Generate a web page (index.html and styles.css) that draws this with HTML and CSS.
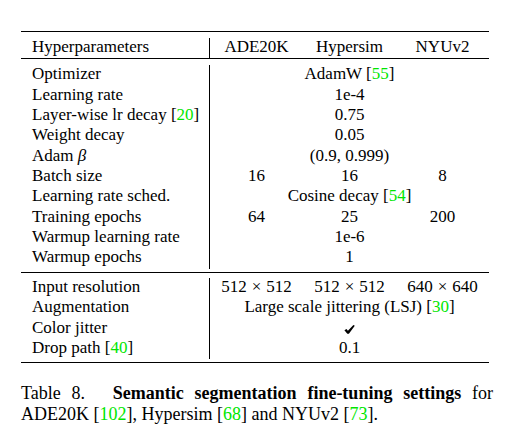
FILE: index.html
```html
<!DOCTYPE html>
<html lang="en">
<head>
  <meta charset="UTF-8">
  <title>Table 8 - Semantic segmentation fine-tuning settings</title>
  <link rel="stylesheet" href="styles.css">
</head>
<body>

<div class="table">
  <div class="sec">
    <span class="vline"></span>
    <div class="label">Hyperparameters</div>
    <div class="val">ADE20K</div>
    <div class="val">Hypersim</div>
    <div class="val">NYUv2</div>
  </div>

  <div class="sec sec-main">
    <span class="vline span-10"></span>
    <div class="label">Optimizer</div>
    <div class="val all">AdamW [<span class="cite">55</span>]</div>
    <div class="label">Learning rate</div>
    <div class="val all">1e-4</div>
    <div class="label">Layer-wise lr decay [<span class="cite">20</span>]</div>
    <div class="val all">0.75</div>
    <div class="label">Weight decay</div>
    <div class="val all">0.05</div>
    <div class="label">Adam <i>β</i></div>
    <div class="val all">(0.9, 0.999)</div>
    <div class="label">Batch size</div>
    <div class="val">16</div>
    <div class="val">16</div>
    <div class="val">8</div>
    <div class="label">Learning rate sched.</div>
    <div class="val all">Cosine decay [<span class="cite">54</span>]</div>
    <div class="label">Training epochs</div>
    <div class="val">64</div>
    <div class="val">25</div>
    <div class="val">200</div>
    <div class="label">Warmup learning rate</div>
    <div class="val all">1e-6</div>
    <div class="label">Warmup epochs</div>
    <div class="val all">1</div>
  </div>

  <div class="sec sec-input">
    <span class="vline span-4"></span>
    <div class="label">Input resolution</div>
    <div class="val">512<span class="times">×</span>512</div>
    <div class="val">512<span class="times">×</span>512</div>
    <div class="val">640<span class="times">×</span>640</div>
    <div class="label">Augmentation</div>
    <div class="val all">Large scale jittering (LSJ) [<span class="cite">30</span>]</div>
    <div class="label">Color jitter</div>
    <div class="val all">
      <svg class="check" width="11" height="9" viewBox="0 0 11 9">
        <path d="M0.4 5.3 L2.5 3.9 L3.9 5.8 L9.4 0 L10.8 0.8 L4.9 8.8 L3.3 8.8 Z" fill="#000"/>
      </svg>
    </div>
    <div class="label">Drop path [<span class="cite">40</span>]</div>
    <div class="val all">0.1</div>
  </div>
</div>

<div class="caption">
  <div class="cap-line"><span class="cap-label">Table 8.</span> <b>Semantic segmentation fine-tuning settings</b> for</div>
  <div>ADE20K [<span class="cite">102</span>], Hypersim [<span class="cite">68</span>] and NYUv2 [<span class="cite">73</span>].</div>
</div>

</body>
</html>
```

FILE: styles.css
```css
* {
  box-sizing: border-box;
  margin: 0;
  padding: 0;
}

body {
  background: #fff;
  color: #000;
  font-family: "Liberation Serif", "Times New Roman", serif;
  font-size: 17px;
}

.table {
  width: 468px;
  margin: 31px 0 0 21px;
  border-top: 1px solid #000;
  border-bottom: 1px solid #000;
}

.sec {
  display: grid;
  grid-template-columns: 188px 1px repeat(3, 1fr);
  grid-auto-rows: 20.33px;
  line-height: 20.33px;
  padding: 5px 0 1px;
}

.sec + .sec {
  border-top: 1px solid #000;
}

.sec-main {
  padding: 5px 0 4.5px;
}

.sec-input {
  padding: 4px 0 3.5px;
}

.vline {
  grid-column: 2;
  grid-row: 1 / span 1;
  background: #000;
  margin: 1px 0 -1px;
}

.vline.span-10 {
  grid-row: 1 / span 10;
}

.vline.span-4 {
  grid-row: 1 / span 4;
}

.label {
  grid-column: 1;
  padding-left: 11px;
  white-space: nowrap;
}

.val {
  text-align: center;
  white-space: nowrap;
}

.val.all {
  grid-column: 3 / span 3;
}

.times {
  margin: 0 5px;
}

.cite {
  color: #00e600;
}

.check {
  vertical-align: -1px;
}

/* Caption */
.caption {
  width: 472px;
  margin: 20.5px 0 0 21px;
  font-size: 18px;
  line-height: 21px;
}

.cap-line {
  text-align: justify;
  text-align-last: justify;
}

.cap-label {
  padding-right: 17px;
}
```
